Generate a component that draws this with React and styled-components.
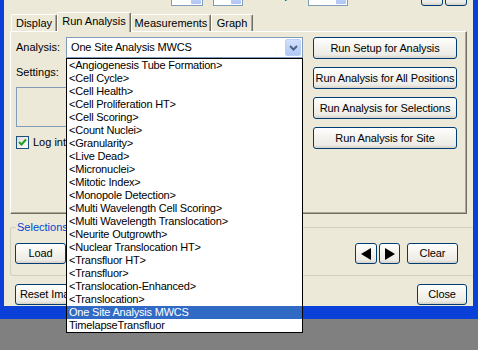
import React from 'react';
import styled, { createGlobalStyle } from 'styled-components';

const GlobalStyle = createGlobalStyle`
  html, body {
    margin: 0;
    padding: 0;
    background: #808080;
  }
  body {
    font-family: "Liberation Sans", Arial, sans-serif;
    font-size: 11px;
    color: #000;
  }
  * { box-sizing: border-box; }
`;

const Page = styled.div`
  width: 478px;
  height: 350px;
  overflow: hidden;
  background: #808080;
`;

const Window = styled.div`
  width: 478px;
  height: 319px;
  background: #ECE9D8;
  border-left: 4px solid #0A40D8;
  border-right: 5px solid #0A40D8;
  border-bottom: 13px solid #0A40D8;
  display: flex;
  flex-direction: column;
`;

const TopRow = styled.div`
  height: 6px;
  overflow: hidden;
  display: flex;
  align-items: flex-end;
  padding-left: 167px;
`;

const SpinBox = styled.div`
  flex: none;
  width: ${p => p.$w}px;
  height: 21px;
  margin-left: ${p => p.$ml || 0}px;
  background: #fff;
  border: 1px solid #7F9DB9;
  display: flex;
  justify-content: flex-end;
  padding: 1px;
`;

const SpinButton = styled.div`
  width: 10px;
  height: 100%;
  background: linear-gradient(#D6E2FC, #AFC6F4);
  border-radius: 1px;
`;

const TopLabel = styled.span`
  flex: none;
  margin-left: ${p => p.$ml}px;
  margin-bottom: 4px;
  line-height: 13px;
`;

const TinyButton = styled.div`
  flex: none;
  width: 22px;
  height: 21px;
  margin-left: ${p => p.$ml}px;
  border: 1px solid #003C74;
  border-radius: 3px;
  background: linear-gradient(#FFFFFF, #ECEBE6 85%, #D6D0C5);
`;

const TabStrip = styled.div`
  margin-top: 6px;
  height: 19px;
  display: flex;
  align-items: flex-end;
  padding-left: 7px;
`;

const Tab = styled.div`
  flex: none;
  width: ${p => p.$w}px;
  height: ${p => (p.$active ? 20 : 17)}px;
  margin-bottom: ${p => (p.$active ? -1 : 0)}px;
  position: relative;
  z-index: ${p => (p.$active ? 2 : 0)};
  background: #ECE9D8;
  border-top: 1px solid #fff;
  border-left: 1px solid #fff;
  border-right: 1px solid #716F64;
  border-radius: 2px 2px 0 0;
  box-shadow: inset -1px 0 0 #ACA899;
  padding-top: 2px;
  text-align: center;
  line-height: 13px;
  white-space: nowrap;
`;

const Panel = styled.div`
  margin-left: 6px;
  width: 457px;
  height: 183px;
  border-top: 1px solid #fff;
  border-left: 1px solid #fff;
  border-right: 1px solid #716F64;
  border-bottom: 1px solid #716F64;
  box-shadow: inset -1px -1px 0 #ACA899;
  padding: 5px;
  display: flex;
  gap: 10px;
`;

const LeftCol = styled.div`
  width: 287px;
  display: flex;
  flex-direction: column;
`;

const FieldRow = styled.div`
  display: flex;
  align-items: center;
  height: 21px;
`;

const Label = styled.span`
  width: ${p => p.$w || 'auto'}px;
  line-height: 13px;
  margin-top: ${p => p.$mt || 0}px;
  white-space: nowrap;
`;

const Combo = styled.div`
  position: relative;
  width: 237px;
  height: 21px;
  background: #fff;
  border: 1px solid #7F9DB9;
  display: flex;
  align-items: center;
  padding: 0 1px 0 4px;
`;

const ComboText = styled.span`
  flex: 1;
  line-height: 13px;
  white-space: nowrap;
  letter-spacing: -0.15px;
`;

const ComboButton = styled.div`
  width: 16px;
  height: 17px;
  background: linear-gradient(#D3E0FD, #B0C7F6);
  border: 1px solid #BCCFF7;
  border-radius: 2px;
  display: flex;
  align-items: center;
  justify-content: center;
`;

const DropList = styled.ul`
  position: absolute;
  top: 20px;
  left: -1px;
  width: 237px;
  height: 275px;
  margin: 0;
  padding: 0;
  list-style: none;
  background: #fff;
  border: 1px solid #000;
  z-index: 10;
`;

const DropItem = styled.li`
  height: 13px;
  line-height: 13px;
  padding-left: 2px;
  white-space: nowrap;
  letter-spacing: -0.2px;
  background: ${p => (p.$selected ? '#316AC5' : 'transparent')};
  color: ${p => (p.$selected ? '#fff' : '#000')};
`;

const SettingsBox = styled.div`
  margin-top: 8px;
  height: 40px;
  border: 1px solid #7F9DB9;
`;

const CheckRow = styled.div`
  margin-top: 9px;
  display: flex;
  align-items: center;
  gap: 4px;
  height: 13px;
`;

const CheckBox = styled.div`
  width: 13px;
  height: 13px;
  border: 1px solid #1C5180;
  background: linear-gradient(135deg, #DCDCD7, #FFFFFF);
  display: flex;
  align-items: center;
  justify-content: center;
`;

const RightCol = styled.div`
  width: 144px;
  display: flex;
  flex-direction: column;
  gap: 8px;
`;

const Button = styled.div`
  flex: none;
  width: ${p => (p.$w ? `${p.$w}px` : '100%')};
  height: ${p => p.$h || 22}px;
  margin-left: ${p => p.$ml || 0}px;
  border: 1px solid #003C74;
  border-radius: 3px;
  background: linear-gradient(#FFFFFF, #F4F3EE 45%, #ECEBE6 85%, #D6D0C5);
  display: flex;
  align-items: center;
  justify-content: ${p => (p.$left ? 'flex-start' : 'center')};
  padding-left: ${p => (p.$left ? 4 : 0)}px;
  line-height: 13px;
  white-space: nowrap;
  letter-spacing: -0.1px;
  overflow: hidden;
`;

const GroupBox = styled.div`
  position: relative;
  margin: 13px 0 0 6px;
  height: 49px;
  border: 1px solid #D0D0BF;
  border-right: none;
  border-radius: 3px 0 0 3px;
  padding: 15px 15px 0 4px;
  display: flex;
  align-items: flex-start;
`;

const Legend = styled.span`
  position: absolute;
  top: -7px;
  left: 5px;
  padding: 0 1px;
  background: #ECE9D8;
  color: #0046D5;
  line-height: 13px;
`;

const NavGroup = styled.div`
  margin-left: auto;
  display: flex;
`;

const BottomRow = styled.div`
  margin-top: 8px;
  display: flex;
  justify-content: space-between;
  padding: 0 6px 0 11px;
`;

const analyses = [
  '<Angiogenesis Tube Formation>',
  '<Cell Cycle>',
  '<Cell Health>',
  '<Cell Proliferation HT>',
  '<Cell Scoring>',
  '<Count Nuclei>',
  '<Granularity>',
  '<Live Dead>',
  '<Micronuclei>',
  '<Mitotic Index>',
  '<Monopole Detection>',
  '<Multi Wavelength Cell Scoring>',
  '<Multi Wavelength Translocation>',
  '<Neurite Outgrowth>',
  '<Nuclear Translocation HT>',
  '<Transfluor HT>',
  '<Transfluor>',
  '<Translocation-Enhanced>',
  '<Translocation>',
  'One Site Analysis MWCS',
  'TimelapseTransfluor',
];

const Chevron = () => (
  <svg width="9" height="6" viewBox="0 0 9 6">
    <polyline points="1,1 4.5,4.5 8,1" fill="none" stroke="#4D6185" strokeWidth="2" />
  </svg>
);

const Tick = () => (
  <svg width="9" height="9" viewBox="0 0 9 9">
    <polyline points="1,4 3.5,6.5 8,1.5" fill="none" stroke="#21A121" strokeWidth="2" />
  </svg>
);

const Arrow = ({ dir }) => (
  <svg width="10" height="12" viewBox="0 0 10 12">
    {dir === 'left'
      ? <polygon points="10,0 10,12 0,6" fill="#000" />
      : <polygon points="0,0 0,12 10,6" fill="#000" />}
  </svg>
);

const App = () => {
  const selected = 'One Site Analysis MWCS';
  return (
    <Page>
      <GlobalStyle />
      <Window>
        <TopRow>
          <SpinBox $w={32}><SpinButton /></SpinBox>
          <SpinBox $w={30} $ml={10}><SpinButton /></SpinBox>
          <TopLabel $ml={25}>Step</TopLabel>
          <SpinBox $w={40} $ml={17}><SpinButton /></SpinBox>
          <TinyButton $ml={73} />
          <TinyButton $ml={2} />
        </TopRow>

        <TabStrip>
          <Tab $w={46}>Display</Tab>
          <Tab $w={74} $active>Run Analysis</Tab>
          <Tab $w={80}>Measurements</Tab>
          <Tab $w={42}>Graph</Tab>
        </TabStrip>

        <Panel>
          <LeftCol>
            <FieldRow>
              <Label $w={50}>Analysis:</Label>
              <Combo>
                <ComboText>{selected}</ComboText>
                <ComboButton><Chevron /></ComboButton>
                <DropList>
                  {analyses.map(a => (
                    <DropItem key={a} $selected={a === selected}>{a}</DropItem>
                  ))}
                </DropList>
              </Combo>
            </FieldRow>
            <Label $mt={8}>Settings:</Label>
            <SettingsBox />
            <CheckRow>
              <CheckBox><Tick /></CheckBox>
              <Label>Log intensity values</Label>
            </CheckRow>
          </LeftCol>
          <RightCol>
            <Button>Run Setup for Analysis</Button>
            <Button>Run Analysis for All Positions</Button>
            <Button>Run Analysis for Selections</Button>
            <Button>Run Analysis for Site</Button>
          </RightCol>
        </Panel>

        <GroupBox>
          <Legend>Selections</Legend>
          <Button $w={51} $h={21}>Load</Button>
          <NavGroup>
            <Button $w={22} $h={21}><Arrow dir="left" /></Button>
            <Button $w={21} $h={21} $ml={2}><Arrow dir="right" /></Button>
            <Button $w={51} $h={21} $ml={7}>Clear</Button>
          </NavGroup>
        </GroupBox>

        <BottomRow>
          <Button $w={110} $h={21} $left>Reset Image Settings</Button>
          <Button $w={50} $h={21}>Close</Button>
        </BottomRow>
      </Window>
    </Page>
  );
};

export default App;
